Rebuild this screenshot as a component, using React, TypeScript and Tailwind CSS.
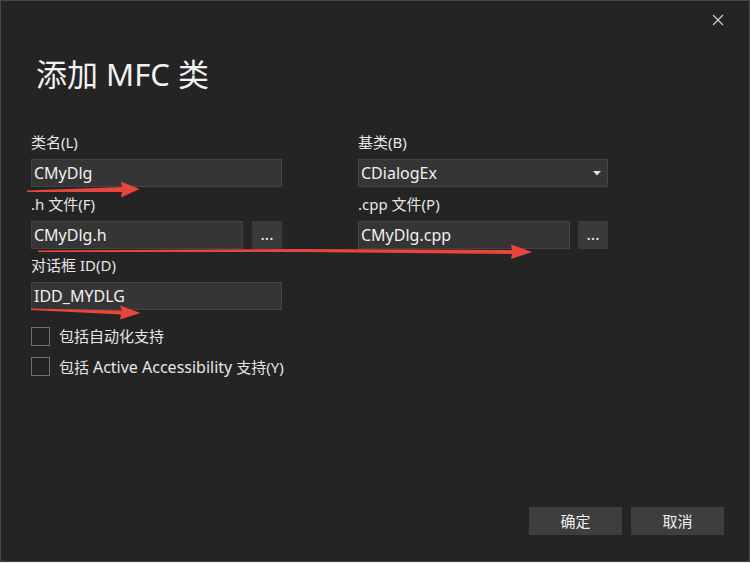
import React from "react";

const FONT = { fontFamily: '"Segoe UI", "Noto Sans", "Noto Sans CJK SC", sans-serif' };

function Label({ children }: { children: React.ReactNode }) {
  return <div className="h-[20px] text-[15px] leading-[20px] text-[#e6e6e6] mb-[7px] whitespace-nowrap">{children}</div>;
}

function Input({ value, className = "" }: { value: string; className?: string }) {
  return (
    <div className={"h-[28px] bg-[#353535] border border-[#434343] flex items-center pl-[2px] text-[16px] text-[#f0f0f0] " + className}>
      {value}
    </div>
  );
}

function Browse() {
  return (
    <div className="w-[30px] h-[28px] bg-[#3a3a3a] flex items-center justify-center text-[16px] text-[#f0f0f0] leading-none pb-[2px]">
      ...
    </div>
  );
}

function Checkbox({ label }: { label: React.ReactNode }) {
  return (
    <div className="flex items-center h-[19px]">
      <div className="w-[19px] h-[19px] border border-[#6f6f6f] mr-[9px]" />
      <span className="text-[15px] text-[#e6e6e6] whitespace-nowrap">{label}</span>
    </div>
  );
}

function Arrows() {
  return (
    <svg className="absolute left-0 top-0 pointer-events-none" width="750" height="563" viewBox="0 0 750 563">
      <g fill="#e8453c">
        <polygon points="26,189.5 121,186 120,180.5 138.5,188 120,196.5 121,191 26,191" />
        <polygon points="37,249.5 300,248 511,249 510,243.5 531,251 510,258 511,253 300,251 37,251" />
        <polygon points="30,307.5 121,309.5 119,304.5 139.5,312 119,318.5 120,313.5 30,309" />
      </g>
    </svg>
  );
}

export default function App() {
  return (
    <div className="w-[750px] h-[563px] bg-[#e9e9e9]" style={FONT}>
      <div className="relative w-[750px] h-[562px] bg-[#242424] border border-[#474747] flex flex-col">
        <div className="absolute right-[25px] top-[13px] w-[12px] h-[12px]">
          <svg width="12" height="12" viewBox="0 0 12 12">
            <path d="M1 1 L11 11 M11 1 L1 11" stroke="#cfcfcf" strokeWidth="1.2" />
          </svg>
        </div>
        <div className="pt-[53px] pl-[35px] text-[31px] leading-[40px] text-[#f2f2f2]">添加 MFC 类</div>
        <div className="pl-[30px] pt-[38px] grid grid-cols-[251px_250px] gap-x-[76px]">
          <div>
            <Label>类名(L)</Label>
            <Input value="CMyDlg" />
          </div>
          <div>
            <Label>基类(B)</Label>
            <div className="h-[28px] bg-[#353535] border border-[#434343] flex items-center justify-between pl-[2px] pr-[6px] text-[16px] text-[#f0f0f0]">
              <span>CDialogEx</span>
              <svg width="8" height="5" viewBox="0 0 8 5">
                <path d="M0 0 H8 L4 4.5 Z" fill="#e0e0e0" />
              </svg>
            </div>
          </div>
          <div className="mt-[7px]">
            <Label>.h 文件(F)</Label>
            <div className="flex gap-[9px]">
              <Input value="CMyDlg.h" className="flex-1" />
              <Browse />
            </div>
          </div>
          <div className="mt-[7px]">
            <Label>.cpp 文件(P)</Label>
            <div className="flex gap-[8px]">
              <Input value="CMyDlg.cpp" className="flex-1" />
              <Browse />
            </div>
          </div>
          <div className="mt-[6px]">
            <Label>对话框 ID(D)</Label>
            <Input value="IDD_MYDLG" />
          </div>
        </div>
        <div className="pl-[30px] pt-[17px] flex flex-col gap-[11px]">
          <Checkbox label="包括自动化支持" />
          <Checkbox
            label={
              <>
                包括 <span className="text-[16px]">Active Accessibility</span> 支持(Y)
              </>
            }
          />
        </div>
        <div className="mt-auto mb-[26px] pr-[25px] flex justify-end gap-[9px]">
          <div className="w-[93px] h-[28px] bg-[#3e3e3e] flex items-center justify-center text-[15px] text-[#f0f0f0]">确定</div>
          <div className="w-[93px] h-[28px] bg-[#3e3e3e] flex items-center justify-center text-[15px] text-[#f0f0f0]">取消</div>
        </div>
        <Arrows />
      </div>
    </div>
  );
}
